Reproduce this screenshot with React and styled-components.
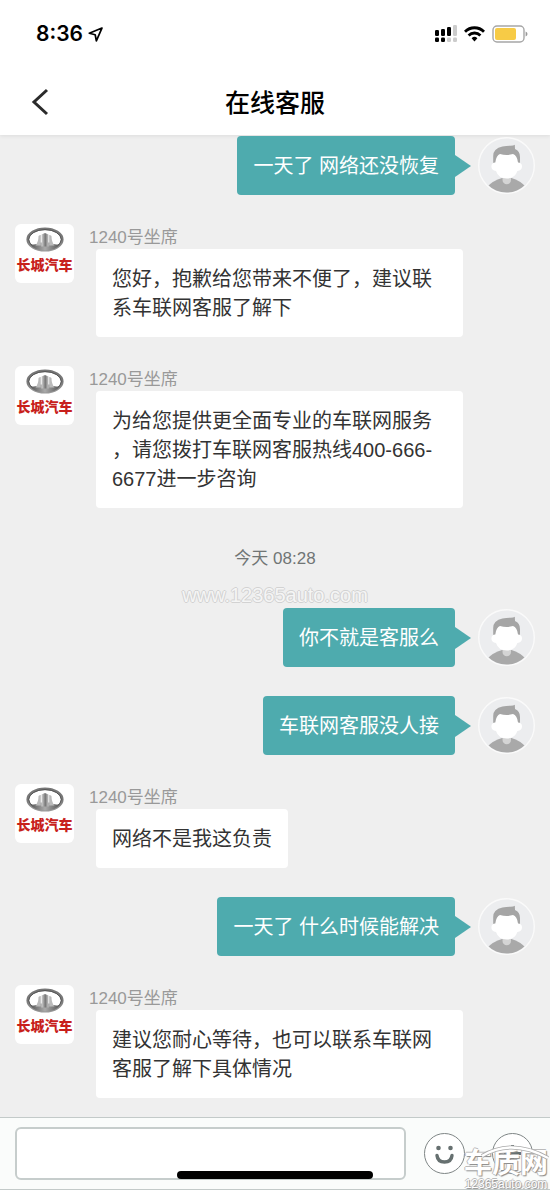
import React from "react";
import styled, { createGlobalStyle } from "styled-components";

const GlobalStyle = createGlobalStyle`
  * {
    box-sizing: border-box;
  }

  body {
    margin: 0;
    background: #efefef;
    color: #333;
    font-family: "Liberation Sans", "Noto Sans CJK SC", sans-serif;
  }
`;

const Page = styled.div`
  position: relative;
  display: flex;
  flex-direction: column;
  min-height: 100vh;
  overflow: hidden;
`;

const Header = styled.header`
  background: #fff;
  box-shadow: 0 1px 4px rgba(0, 0, 0, 0.08);
`;

const StatusBar = styled.div`
  display: flex;
  align-items: center;
  justify-content: space-between;
  height: 68px;
  padding: 0 22px 0 36px;
`;

const Clock = styled.div`
  display: flex;
  align-items: center;
  gap: 5px;
  color: #000;
  font: 600 21px/26px Inter, sans-serif;
`;

const StatusIcons = styled.div`
  display: flex;
  align-items: center;
  gap: 7px;
`;

const TitleBar = styled.div`
  display: grid;
  grid-template-columns: 60px 1fr 60px;
  align-items: center;
  height: 67px;
`;

const BackButton = styled.button`
  display: flex;
  align-items: center;
  height: 44px;
  padding: 0 0 0 30px;
  border: 0;
  background: none;
`;

const Title = styled.h1`
  margin: 0;
  padding-top: 2px;
  color: #000;
  font-size: 25px;
  font-weight: 500;
  line-height: 36px;
  text-align: center;
`;

const Chat = styled.main`
  display: flex;
  flex: 1;
  flex-direction: column;
  gap: 29px;
  padding: 1px 15px 19px;
`;

const AgentRow = styled.div`
  display: flex;
  align-items: flex-start;
  gap: 15px;
  padding-right: 72px;
`;

const CustomerRow = styled.div`
  display: flex;
  align-items: center;
  justify-content: flex-end;
  gap: 23px;
`;

const AgentBody = styled.div`
  display: flex;
  flex: 1;
  flex-direction: column;
`;

const AgentName = styled.div`
  padding-top: 2px;
  color: #999;
  font-size: 17px;
  line-height: 23px;
`;

const Bubble = styled.div`
  position: relative;
  padding: 16px 16px 14px;
  border-radius: 4px;
  font-size: 20px;
  line-height: 29px;
`;

const AgentBubble = styled(Bubble)`
  align-self: ${({ $wide }) => ($wide ? "stretch" : "flex-start")};
  margin-left: 7px;
  background: #fff;
  line-break: anywhere;
  white-space: pre-line;
`;

const CustomerBubble = styled(Bubble)`
  background: #4eabae;
  color: #fff;

  &::after {
    content: "";
    position: absolute;
    top: 19px;
    left: 100%;
    border: solid transparent;
    border-width: 11px 0 11px 16px;
    border-left-color: #4eabae;
  }
`;

const TimeStamp = styled.div`
  padding-top: 2px;
  color: #707575;
  font-size: 17px;
  line-height: 40px;
  text-align: center;
`;

const LogoCard = styled.div`
  display: flex;
  flex: none;
  flex-direction: column;
  align-items: center;
  gap: 2px;
  width: 59px;
  height: 59px;
  padding-top: 3px;
  border-radius: 6px;
  background: #fff;
`;

const LogoText = styled.div`
  color: #c81f1c;
  font-size: 14px;
  font-weight: 900;
  line-height: 20px;
  white-space: nowrap;
`;

const InputBar = styled.form`
  display: flex;
  align-items: center;
  height: 73px;
  padding: 0 17px 0 15px;
  border: solid #c3cac9;
  border-width: 1px 0;
  background: #fafcfb;
`;

const MessageInput = styled.input`
  flex: 1;
  min-width: 0;
  height: 53px;
  padding: 0 15px;
  border: 2px solid #c6cdcc;
  border-radius: 6px;
  background: #fff;
  font: inherit;
  font-size: 20px;
`;

const Tools = styled.div`
  display: flex;
  gap: 27px;
  margin-left: 18px;
`;

const ToolButton = styled.button`
  display: block;
  padding: 0;
  border: 0;
  background: none;

  svg {
    display: block;
  }
`;

const HomeIndicator = styled.div`
  position: absolute;
  bottom: 11px;
  left: 50%;
  width: 196px;
  height: 8px;
  margin-left: -98px;
  border-radius: 4px;
  background: #000;
`;

const SiteMark = styled.div`
  position: absolute;
  top: 584px;
  left: 0;
  width: 100%;
  color: #f5f5f5;
  font-size: 20px;
  line-height: 22px;
  text-align: center;
  text-shadow: 1px 0 #d2d2d2, -1px 0 #d2d2d2, 0 1px #d2d2d2, 0 -1px #d2d2d2;
  pointer-events: none;
`;

const CornerMark = styled.div`
  position: absolute;
  right: 2px;
  bottom: 0;
  display: flex;
  flex-direction: column;
  align-items: center;
  color: #fff;
  text-shadow: 1px 1px 1px #888, -1px 0 #bbb, 0 -1px #bbb;
  pointer-events: none;

  svg {
    position: absolute;
    top: -6px;
    left: 0;
  }
`;

const MarkName = styled.div`
  font-size: 28px;
  font-weight: 700;
  line-height: 28px;
`;

const MarkSite = styled.div`
  font-size: 12px;
  line-height: 12px;
`;

const messages = [
  { from: "customer", text: "一天了 网络还没恢复" },
  { from: "agent", wide: true, text: "您好，抱歉给您带来不便了，建议联系车联网客服了解下" },
  {
    from: "agent",
    wide: true,
    text: "为给您提供更全面专业的车联网服务\n，请您拨打车联网客服热线400-666-\n6677进一步咨询",
  },
  { from: "time", text: "今天 08:28" },
  { from: "customer", text: "你不就是客服么" },
  { from: "customer", text: "车联网客服没人接" },
  { from: "agent", text: "网络不是我这负责" },
  { from: "customer", text: "一天了 什么时候能解决" },
  { from: "agent", wide: true, text: "建议您耐心等待，也可以联系车联网客服了解下具体情况" },
];

const LocationIcon = () => (
  <svg width="15" height="15" viewBox="0 0 14 14" fill="none" stroke="#000" strokeWidth="1.6" strokeLinejoin="round">
    <path d="M13 1 1.2 5.8 6.7 7.2 7.8 12.9Z" />
  </svg>
);

const SignalIcon = () => (
  <svg width="23" height="18" viewBox="0 0 23 18">
    <g fill="#000">
      <rect x="1" y="5" width="4" height="6" rx="1.2" />
      <rect x="7" y="4" width="4" height="7" rx="1.2" />
      <rect x="13" y="2" width="4" height="9" rx="1.2" />
      <rect x="1" y="12.5" width="4" height="4.5" rx="1.2" />
      <rect x="7" y="12.5" width="4" height="4.5" rx="1.2" />
    </g>
    <g fill="#ccc">
      <rect x="19" y="0" width="4" height="11" rx="1.2" />
      <rect x="13" y="12.5" width="4" height="4.5" rx="1.2" />
      <rect x="19" y="12.5" width="4" height="4.5" rx="1.2" />
    </g>
  </svg>
);

const WifiIcon = () => (
  <svg width="21" height="16" viewBox="0 0 21 16" fill="none" stroke="#000" strokeWidth="2.8">
    <path d="M1 5.7a13.4 13.4 0 0 1 19 0" />
    <path d="M4.6 9.4a8.4 8.4 0 0 1 11.8 0" />
    <path d="M7.6 12.2a4.2 4.2 0 0 1 5.8 0L10.5 15.4Z" fill="#000" stroke="none" />
  </svg>
);

const BatteryIcon = () => (
  <svg width="36" height="18" viewBox="0 0 36 18">
    <rect x="1" y="1" width="31" height="16" rx="4" fill="#fff" stroke="#a6a6a6" strokeWidth="1.4" />
    <rect x="3" y="3" width="21" height="12" rx="2" fill="#f7cb46" />
    <path d="M33.6 6.5v5q1.9-.6 1.9-2.5t-1.9-2.5Z" fill="#999" />
  </svg>
);

const BackIcon = () => (
  <svg width="20" height="28" viewBox="0 0 20 28" fill="none" stroke="#2b2b2b" strokeWidth="3">
    <path d="M17 2 4 14l13 12" />
  </svg>
);

const CustomerAvatar = () => (
  <svg width="57" height="57" viewBox="0 0 57 57">
    <defs>
      <clipPath id="avatar-clip">
        <circle cx="28.5" cy="28.5" r="27" />
      </clipPath>
    </defs>
    <circle cx="28.5" cy="28.5" r="27.8" fill="#ecedef" stroke="#fafafa" strokeWidth="1.4" />
    <g clipPath="url(#avatar-clip)">
      <path d="M9 50Q15 43.5 24 41h9.5Q42 43.5 48 50 40 57 28.5 57T9 50Z" fill="#a9a9a9" />
      <path d="M24.5 38h8.5v5a4.25 4.25 0 0 1-8.5 0Z" fill="#d4d4d4" />
      <path d="M15.2 26v-7q0-7.5 9.3-9.5 4-.8 8-.8 3 0 4.3-.9l.2 4.2q5 2 5 8v6Z" fill="#a5a5a5" />
      <path
        d="M17.3 25.5q1-7.5 4.7-8.5 6.5 2 13 0 4 1 5 8.5 4 .3 4 4t-4.6 4.5Q37 41.5 28.7 41.5T18 34q-4.6-.8-4.6-4.5t3.9-4Z"
        fill="#fff"
      />
    </g>
  </svg>
);

const BrandEmblem = () => (
  <svg width="38" height="26" viewBox="0 0 38 26">
    <defs>
      <linearGradient id="chrome" x1="0" y1="0" x2="0" y2="1">
        <stop offset="0" stopColor="#777" />
        <stop offset=".5" stopColor="#777" />
        <stop offset="1" stopColor="#999" />
      </linearGradient>
      <linearGradient id="tower">
        <stop offset="0" stopColor="#d5d5d5" />
        <stop offset=".55" stopColor="#777" />
        <stop offset="1" stopColor="#c5c5c5" />
      </linearGradient>
      <linearGradient id="base" x1="0" y1="0" x2="1" y2="0">
        <stop offset="0" stopColor="#555" />
        <stop offset=".5" stopColor="#aaa" />
        <stop offset="1" stopColor="#555" />
      </linearGradient>
    </defs>
    <ellipse cx="19" cy="12.5" rx="17.3" ry="10.8" fill="#fff" stroke="url(#chrome)" strokeWidth="2.6" />
    <ellipse cx="19" cy="12.5" rx="16.2" ry="9.8" fill="none" stroke="#444" strokeWidth=".8" />
    <path d="M4 17q6 1.5 9-1.5h12q3 3 9 1.5-4 6.5-15 6.5T4 17Z" fill="url(#base)" />
    <path d="M12.5 9q1-1 2.3-1v10.5H9.5Q12.5 15 12.5 9ZM25.5 9q-1-1-2.3-1v10.5h5.3Q25.5 15 25.5 9Z" fill="#bbb" />
    <path d="M15.5 7.5 19 6l3.5 1.5v12h-7Z" fill="url(#tower)" />
  </svg>
);

const SmileIcon = () => (
  <svg width="41" height="41" viewBox="0 0 41 41" fill="none">
    <circle cx="20.5" cy="20.5" r="20" fill="#fff" stroke="#7e8585" />
    <circle cx="14.5" cy="15" r="2.3" fill="#667070" />
    <circle cx="26.5" cy="15" r="2.3" fill="#667070" />
    <path d="M13 22.5q.7 6.5 7.5 6.5t7.5-6.5" stroke="#667070" strokeWidth="3.4" strokeLinecap="round" />
  </svg>
);

const PlusIcon = () => (
  <svg width="41" height="41" viewBox="0 0 41 41" fill="none" stroke="#667070">
    <circle cx="20.5" cy="20.5" r="20" fill="#fff" stroke="#7e8585" />
    <path d="M20.5 12v17M12 20.5h17" strokeWidth="3" />
  </svg>
);

const AgentAvatar = () => (
  <LogoCard>
    <BrandEmblem />
    <LogoText>长城汽车</LogoText>
  </LogoCard>
);

const Message = ({ from, text, wide }) => {
  if (from === "time") return <TimeStamp>{text}</TimeStamp>;

  if (from === "customer") {
    return (
      <CustomerRow>
        <CustomerBubble>{text}</CustomerBubble>
        <CustomerAvatar />
      </CustomerRow>
    );
  }

  return (
    <AgentRow>
      <AgentAvatar />
      <AgentBody>
        <AgentName>1240号坐席</AgentName>
        <AgentBubble $wide={wide}>{text}</AgentBubble>
      </AgentBody>
    </AgentRow>
  );
};

const App = () => (
  <>
    <GlobalStyle />
    <Page>
      <Header>
        <StatusBar>
          <Clock>
            8:36
            <LocationIcon />
          </Clock>
          <StatusIcons>
            <SignalIcon />
            <WifiIcon />
            <BatteryIcon />
          </StatusIcons>
        </StatusBar>
        <TitleBar>
          <BackButton type="button" aria-label="返回">
            <BackIcon />
          </BackButton>
          <Title>在线客服</Title>
        </TitleBar>
      </Header>
      <Chat>
        {messages.map((message, index) => (
          <Message key={index} {...message} />
        ))}
      </Chat>
      <InputBar onSubmit={(event) => event.preventDefault()}>
        <MessageInput type="text" aria-label="消息" />
        <Tools>
          <ToolButton type="button" aria-label="表情">
            <SmileIcon />
          </ToolButton>
          <ToolButton type="button" aria-label="更多">
            <PlusIcon />
          </ToolButton>
        </Tools>
      </InputBar>
      <HomeIndicator />
      <SiteMark>www.12365auto.com</SiteMark>
      <CornerMark>
        <svg width="86" height="24" viewBox="0 0 86 24" fill="none">
          <path d="M18 12Q48-6 84 14" stroke="#aaa" strokeWidth="4" />
          <path d="M18 12Q48-6 84 14" stroke="#fff" strokeWidth="2.5" />
        </svg>
        <MarkName>车质网</MarkName>
        <MarkSite>12365auto.com</MarkSite>
      </CornerMark>
    </Page>
  </>
);

export default App;
